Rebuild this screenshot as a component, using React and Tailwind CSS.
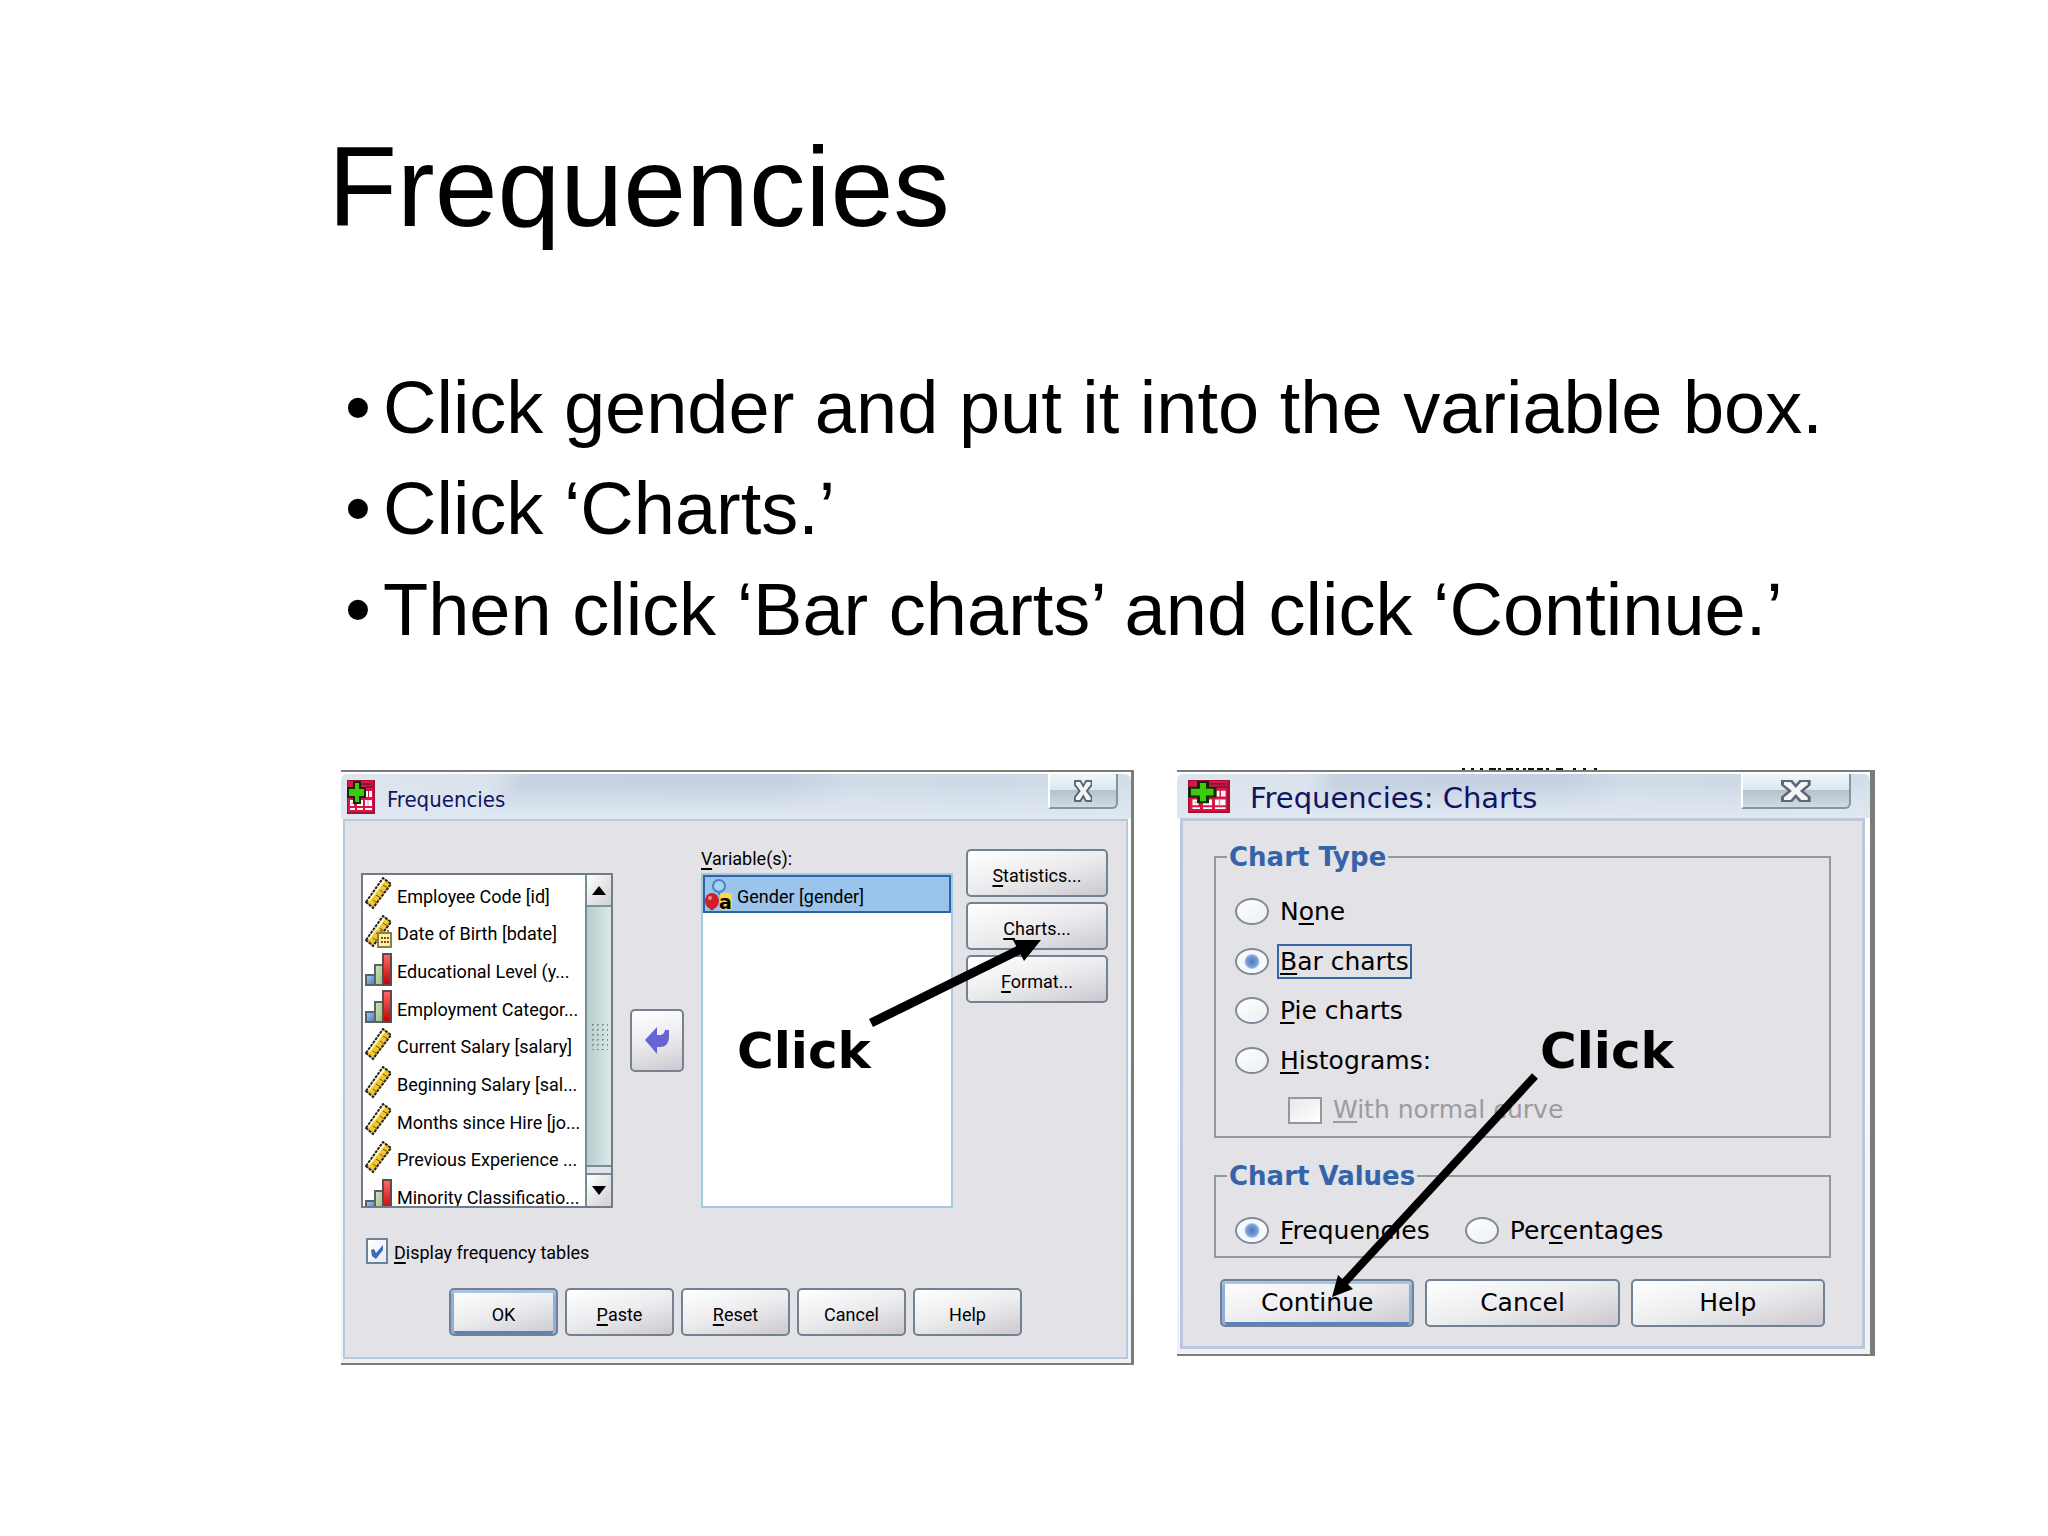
import clsx from "clsx";

const VARIABLES = [
    { icon: "scale", label: "Employee Code [id]" },
    { icon: "date", label: "Date of Birth [bdate]" },
    { icon: "ordinal", label: "Educational Level (y..." },
    { icon: "ordinal", label: "Employment Categor..." },
    { icon: "scale", label: "Current Salary [salary]" },
    { icon: "scale", label: "Beginning Salary [sal..." },
    { icon: "scale", label: "Months since Hire [jo..." },
    { icon: "scale", label: "Previous Experience ..." },
    { icon: "ordinal", label: "Minority Classificatio..." },
];

const STEPS = [
    "Click gender and put it into the variable box.",
    "Click ‘Charts.’",
    "Then click ‘Bar charts’ and click ‘Continue.’",
];

// underlines the shortcut letter of a label
const Mnemonic = ({ text, at }) => {
    if (at === undefined) return text;
    return (
        <>
            {text.slice(0, at)}
            <span className="underline decoration-2 underline-offset-3">{text[at]}</span>
            {text.slice(at + 1)}
        </>
    );
};

const AppIcon = ({ className }) => (
    <svg viewBox="0 0 28 34" preserveAspectRatio="none" className={className} aria-hidden="true">
        <rect width="28" height="34" fill="#a80c38" />
        <rect x="1" y="1" width="25" height="31" fill="#d81648" />
        <path d="M13 4h12M19 7h7" stroke="#8e1236" strokeWidth="2" />
        <path d="M19 11h2v6h-2zM22 11h3v6h-3zM3 20h4v6H3zM10 20h6v6h-6zM18 20h7v6h-7zM3 28h5v2H3zM10 28h6v2h-6zM18 28h7v2h-7z" fill="#fff" />
        <path d="M5 22v2M12 21v3M21 20v6" stroke="#e88aa4" strokeWidth="1" />
        <path d="M7 2h6v6h5v9h-5v6H7v-6H1V8h6z" fill="#3ecb0c" stroke="#0d2a06" strokeWidth="2" />
    </svg>
);

const RulerShape = () => (
    <>
        <path d="M1 25L18 1l8 6L8 31z" fill="#f2c62c" />
        <path d="M3 24L19 3" stroke="#fffbd0" strokeWidth="3" />
        <path d="M1 25L18 1l8 6L8 31z" fill="none" stroke="#26231a" strokeWidth="2" strokeDasharray="3 1" />
        <path d="M8 23l4 3M11 18l5 3M15 13l4 3M18 8l5 3" stroke="#6a5413" strokeWidth="1" />
    </>
);

const VariableIcon = ({ type }) => (
    <svg viewBox="0 0 27 33" className="h-[33px] w-[27px] shrink-0" aria-hidden="true">
        {type === "scale" && <RulerShape />}
        {type === "date" && (
            <>
                <RulerShape />
                <rect x="13" y="18" width="13" height="14" fill="#fbf3a2" stroke="#8a7f45" strokeWidth="2" />
                <path d="M16 17v-2M23 17v-2" stroke="#8a7f45" strokeWidth="2" />
                <path d="M16 23h2M19 23h2M22 23h2M16 27h2M22 27h2" stroke="#6d5b25" strokeWidth="2" />
                <path d="M19 27h2" stroke="#d12" strokeWidth="2" />
            </>
        )}
        {type === "ordinal" && (
            <>
                <rect x="1" y="22" width="9" height="10" fill="url(#barBlue)" stroke="#5d6068" strokeWidth="2" />
                <rect x="10" y="12" width="8" height="20" fill="url(#barGreen)" stroke="#5d6068" strokeWidth="2" />
                <rect x="18" y="1" width="8" height="31" fill="url(#barRed)" stroke="#5d4a4e" strokeWidth="2" />
            </>
        )}
        {type === "nominal" && (
            <>
                <circle cx="14" cy="8" r="6" fill="#a9d0f3" stroke="#4a83c6" strokeWidth="2" />
                <path d="M14 14v3" stroke="#4a83c6" strokeWidth="2" />
                <ellipse cx="7" cy="23" rx="7" ry="8" fill="#cf1f27" />
                <ellipse cx="5" cy="20" rx="2" ry="2" fill="#ee8d8d" />
                <path d="M5 32l2-2 2 2z" fill="#8c1016" />
                <rect x="15" y="15" width="12" height="17" rx="3" fill="#ffd83c" />
                <text x="14" y="31" fontFamily="DejaVu Sans" fontWeight="700" fontSize="19">a</text>
            </>
        )}
    </svg>
);

const Gradients = () => (
    <svg width="0" height="0" className="absolute" aria-hidden="true">
        <defs>
            <linearGradient id="barBlue" x2="1" y2="1">
                <stop stopColor="#a9cbf0" />
                <stop offset="1" stopColor="#3f78bd" />
            </linearGradient>
            <linearGradient id="barGreen" x2="1" y2="1">
                <stop stopColor="#cfe6b8" />
                <stop offset="1" stopColor="#93bd80" />
            </linearGradient>
            <linearGradient id="barRed" x2="0" y2="1">
                <stop stopColor="#ff6a66" />
                <stop offset="1" stopColor="#c00006" />
            </linearGradient>
        </defs>
    </svg>
);

const Button = ({ label, at, primary, className }) => (
    <button
        type="button"
        className={clsx(
            "h-[48px] rounded-[5px] border-2 border-[#728293] bg-linear-165 from-white via-[#ececef] to-[#cbc9cf] text-center text-black",
            primary && "shadow-[inset_0_3px_0_#a9c3e3,inset_3px_0_0_#8fafd8,inset_-3px_0_0_#8fafd8,inset_0_-3px_0_#5a82bd]",
            className
        )}
    >
        <Mnemonic text={label} at={at} />
    </button>
);

const CloseButton = ({ className }) => (
    <button
        type="button"
        aria-label="Close"
        className={clsx(
            "flex h-[35px] items-center justify-center rounded-br-[6px] border-r-2 border-b-2 border-l-2 border-r-[#8494a0] border-b-[#8494a0] border-l-white bg-[linear-gradient(#eef6fa_0%,#dbe7ee_48%,#b4c2cb_50%,#cfdce3_100%)]",
            className
        )}
    >
        <svg viewBox="0 0 20 22" preserveAspectRatio="none" className="h-[22px] w-[28%]" aria-hidden="true">
            <path d="M1 1h6l3 5 3-5h6v4l-5 6 5 6v4h-6l-3-5-3 5H1v-4l5-6-5-6z" fill="#f4f5f7" stroke="#5d6674" strokeWidth="2" />
        </svg>
    </button>
);

const TitleBar = ({ className, children }) => (
    <header
        className={clsx(
            "mt-[2px] flex items-start rounded-t-[6px] bg-[linear-gradient(transparent_20%,#dfe8f1_95%),linear-gradient(115deg,#dde6ee_0%,#dae3ec_19%,#c6d2e1_23%,#c5d1e0_55%,#d2dce9_64%,#cdd9e6_80%,#d3e0eb_100%)]",
            className
        )}
    >
        {children}
    </header>
);

const Radio = ({ name, label, at, checked, focused, id }) => (
    <div className="flex items-center">
        <input
            type="radio"
            id={id}
            name={name}
            defaultChecked={checked}
            className="h-[27px] w-[34px] appearance-none rounded-[50%] border-2 border-[#7f8b96] bg-linear-to-br from-white to-[#eceef2] checked:bg-[radial-gradient(circle_at_center,#4a78be_0,#7ea2d8_6px,#f4f7fb_8px,#fff_100%)]"
        />
        <label
            htmlFor={id}
            className={clsx("ml-[8px] border-2 px-px leading-[31px]", focused ? "border-[#3a66a8]" : "border-transparent")}
        >
            <Mnemonic text={label} at={at} />
        </label>
    </div>
);

const FrequenciesDialog = () => (
    <section className="border-t-2 border-r-[3px] border-b-2 border-[#7c7c7a] bg-linear-to-b from-white to-[#eef2f7] font-['Roboto',sans-serif] text-[18px]">
        <TitleBar className="h-[45px] pr-[13px] pl-[6px]">
            <AppIcon className="mt-[6px] h-[34px] w-[28px]" />
            <h2 className="mt-[12px] ml-[12px] flex-1 font-['DejaVu_Sans_Condensed','DejaVu_Sans',sans-serif] text-[22px] leading-[28px] text-[#13135f]">Frequencies</h2>
            <CloseButton className="w-[70px]" />
        </TitleBar>

        <div className="mr-[3px] mb-[4px] ml-[2px] border-2 border-[#b7c8dc] bg-[#e3e2e7] pb-[21px] pl-[16px]">
            <div className="grid grid-cols-[1fr_88px_1fr_173px]">
                <div className="mt-[52px] flex h-[335px] border-2 border-[#6f7c8b] bg-white">
                    <div className="min-w-0 flex-1 overflow-hidden">
                        <ul className="grid h-[339px] grid-rows-9">
                            {VARIABLES.map((v) => (
                                <li key={v.label} className="flex items-center gap-[5px] pl-[2px] whitespace-nowrap">
                                    <VariableIcon type={v.icon} />
                                    <span className="pt-[6px] leading-[26px]">{v.label}</span>
                                </li>
                            ))}
                        </ul>
                    </div>
                    <div className="flex w-[26px] flex-col border-l-2 border-[#6f8f92] bg-linear-to-r from-[#b9cccd] to-[#dbe8e8]">
                        <button type="button" aria-label="Scroll up" className="flex h-[32px] items-center justify-center border-b-2 border-[#6f9c8c] bg-linear-to-br from-white to-[#cfcfd6]">
                            <svg viewBox="0 0 14 9" className="h-[9px] w-[14px]"><path d="M7 0l7 9H0z" /></svg>
                        </button>
                        <div className="flex flex-1 items-center justify-center">
                            <div className="h-[28px] w-[18px] bg-[radial-gradient(#7a8f92_1px,transparent_1px)] bg-size-[5px_5px]" />
                        </div>
                        <div className="h-[10px] border-y-2 border-[#7b8a94] bg-[#dfe2e8]" />
                        <button type="button" aria-label="Scroll down" className="flex h-[31px] items-center justify-center bg-linear-to-br from-white to-[#cfcfd6]">
                            <svg viewBox="0 0 14 9" className="h-[9px] w-[14px]"><path d="M7 9l7-9H0z" /></svg>
                        </button>
                    </div>
                </div>

                <button type="button" aria-label="Move variable" className="mt-[188px] flex h-[63px] w-[54px] items-center justify-center justify-self-center rounded-[5px] border-2 border-[#77828f] bg-linear-165 from-white via-[#ececef] to-[#cbc9cf]">
                    <svg viewBox="0 0 24 27" className="h-[27px] w-[24px]">
                        <path d="M0 13L12 0v8h3q4 0 5-5h4v8q-1 9-9 9h-3v7z" fill="#6663d3" />
                    </svg>
                </button>

                <div>
                    <h3 className="mt-[24px] h-[28px] leading-[28px]"><Mnemonic text="Variable(s):" at={0} /></h3>
                    <ul className="h-[335px] border-2 border-[#9fcae2] bg-white">
                        <li className="flex h-[38px] items-center gap-[5px] border-2 border-[#2f62a6] bg-[#9ac4eb]">
                            <VariableIcon type="nominal" />
                            <span className="pt-[6px] leading-[26px]">Gender [gender]</span>
                        </li>
                    </ul>
                </div>

                <div className="mt-[28px] mr-[18px] ml-[13px] grid content-start gap-[5px]">
                    <Button label="Statistics..." at={0} className="pt-[5px]" />
                    <Button label="Charts..." at={0} className="pt-[5px]" />
                    <Button label="Format..." at={0} className="pt-[5px]" />
                </div>
            </div>

            <div className="mt-[30px] ml-[5px] flex items-center">
                <span className="relative flex">
                    <input type="checkbox" id="tables" defaultChecked className="peer h-[26px] w-[22px] appearance-none border-2 border-[#6f8196] bg-linear-to-br from-white to-[#e6ebf3]" />
                    <svg viewBox="0 0 22 26" className="pointer-events-none absolute inset-0 hidden peer-checked:block">
                        <path d="M5 12l3-1 2 4 7-8v5l-7 9-4-3z" fill="#3a6db8" />
                    </svg>
                </span>
                <label htmlFor="tables" className="ml-[6px] pt-[3px] leading-[23px]"><Mnemonic text="Display frequency tables" at={0} /></label>
            </div>

            <div className="mt-[24px] flex justify-center gap-[7px] pr-[16px]">
                <Button label="OK" primary className="w-[109px] pt-[5px]" />
                <Button label="Paste" at={0} className="w-[109px] pt-[5px]" />
                <Button label="Reset" at={0} className="w-[109px] pt-[5px]" />
                <Button label="Cancel" className="w-[109px] pt-[5px]" />
                <Button label="Help" className="w-[109px] pt-[5px]" />
            </div>
        </div>
    </section>
);

const ChartsDialog = () => (
    <section className="border-t-2 border-r-[5px] border-b-2 border-[#7c7c7a] bg-linear-to-b from-white to-[#eef2f7] font-['DejaVu_Sans',sans-serif] text-[25px]">
        <TitleBar className="h-[44px] pr-[19px] pl-[11px]">
            <AppIcon className="mt-[6px] h-[33px] w-[42px]" />
            <h2 className="mt-[10px] ml-[20px] flex-1 text-[29px] leading-[28px] text-[#13135f]">Frequencies: Charts</h2>
            <CloseButton className="w-[110px]" />
        </TitleBar>

        <div className="mr-[5px] mb-[5px] ml-[3px] border-[3px] border-[#bcc6dd] bg-[#e3e2e7] px-[31px] pt-[22px] pb-[19px]">
            <fieldset className="border-2 border-[#96969b] pb-[12px] pl-[19px]">
                <legend className="-ml-[8px] px-[2px] text-[26px] leading-[28px] font-bold text-[#3563a8]">Chart Type</legend>
                <div className="mt-[16px] grid h-[198px] grid-rows-4">
                    <Radio id="none" name="type" label="None" at={1} />
                    <Radio id="bar" name="type" label="Bar charts" at={0} checked focused />
                    <Radio id="pie" name="type" label="Pie charts" at={0} />
                    <Radio id="hist" name="type" label="Histograms:" at={0} />
                </div>
                <div className="mt-[11px] ml-[53px] flex h-[28px] items-center text-[#9b9ba0]">
                    <input type="checkbox" id="curve" disabled className="h-[27px] w-[34px] appearance-none border-2 border-[#96969b] bg-linear-to-br from-[#e8e8ea] to-white" />
                    <label htmlFor="curve" className="ml-[11px]"><Mnemonic text="With normal curve" at={0} /></label>
                </div>
            </fieldset>

            <fieldset className="mt-[24px] border-2 border-[#96969b] pb-[12px] pl-[19px]">
                <legend className="-ml-[8px] px-[2px] text-[26px] leading-[28px] font-bold text-[#3563a8]">Chart Values</legend>
                <div className="mt-[26px] flex h-[28px] items-center gap-[32px]">
                    <Radio id="freq" name="values" label="Frequencies" at={0} checked />
                    <Radio id="perc" name="values" label="Percentages" at={3} />
                </div>
            </fieldset>

            <div className="mt-[21px] grid grid-cols-3 gap-[11px] px-[6px]">
                <Button label="Continue" primary />
                <Button label="Cancel" />
                <Button label="Help" />
            </div>
        </div>
    </section>
);

const App = () => (
    <main className="min-h-screen bg-white pt-[123px] pr-[173px] pb-[170px] pl-[328px] font-['Liberation_Sans',sans-serif] text-black">
        <Gradients />
        <h1 className="text-[113px] leading-[128px]">Frequencies</h1>

        <ul className="mt-[106px] pl-[17px] text-[74px] leading-[101px]">
            {STEPS.map((step) => (
                <li key={step} className="flex whitespace-nowrap">
                    <span className="w-[38px] shrink-0">•</span>
                    {step}
                </li>
            ))}
        </ul>

        <div className="mt-[110px] ml-[13px] grid grid-cols-[793fr_698fr] items-start gap-[43px]">
            <div className="relative">
                <FrequenciesDialog />
                <p className="absolute top-[256px] left-[396px] font-['DejaVu_Sans',sans-serif] text-[50px] leading-[50px] font-bold">Click</p>
                <svg viewBox="0 0 190 110" className="absolute top-[160px] left-[520px] h-[110px] w-[190px]" aria-hidden="true">
                    <path d="M10 93L160 19" stroke="#000" strokeWidth="9" />
                    <path d="M180 10h-28l11 21z" />
                </svg>
            </div>
            <div className="relative">
                <svg viewBox="0 0 140 3" className="absolute -top-[2px] left-[284px] h-[3px] w-[140px]" aria-hidden="true">
                    <path d="M1 1h3M10 1h3M19 1h3M28 1h7M37 1h3M45 1h7M55 1h3M62 1h3M67 1h6M76 1h6M85 1h3M95 1h7M112 1h3M122 1h3M133 1h3" stroke="#111" strokeWidth="2" />
                </svg>
                <ChartsDialog />
                <p className="absolute top-[256px] left-[363px] font-['DejaVu_Sans',sans-serif] text-[50px] leading-[50px] font-bold">Click</p>
                <svg viewBox="0 0 215 235" className="absolute top-[300px] left-[150px] h-[235px] w-[215px]" aria-hidden="true">
                    <path d="M208 6L17 213" stroke="#000" strokeWidth="8" />
                    <path d="M5 227l6-22 15 14z" />
                </svg>
            </div>
        </div>
    </main>
);

export default App;
